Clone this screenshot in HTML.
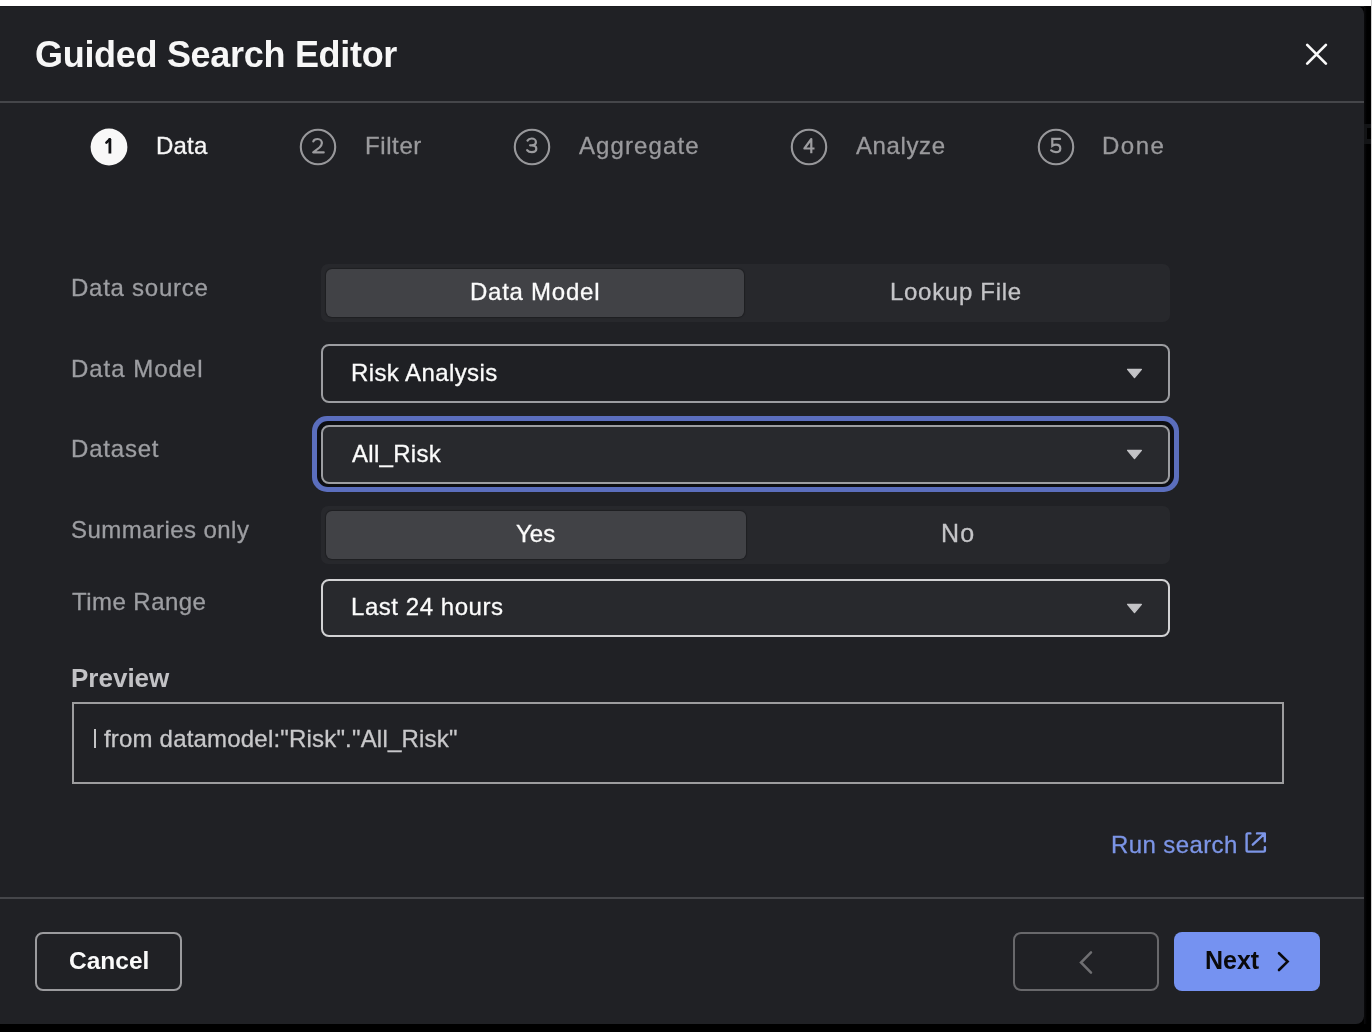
<!DOCTYPE html>
<html><head><meta charset="utf-8">
<style>
html,body{margin:0;padding:0;}
body{width:1372px;height:1032px;position:relative;overflow:hidden;background:#000;font-family:"Liberation Sans",sans-serif;}
.a{position:absolute;}
.t{position:absolute;white-space:nowrap;line-height:normal;will-change:transform;-webkit-text-stroke:0.3px currentColor;}
#topstrip{left:0;top:0;width:1372px;height:6px;background:#fff;}
#rline{left:1371px;top:0;width:1px;height:1032px;background:#cfcfcf;}
#dlg{left:-8px;top:6px;width:1372px;height:1018px;background:#202125;border-radius:8px;}
.div{height:2px;background:#45464a;left:0;width:1364px;}
.circ{width:33px;height:33px;border-radius:50%;border:2px solid #9d9d9f;}
.circ.on{background:#f8f8f8;border-color:#f8f8f8;}
.num{font-size:20.5px;color:#a3a3a5;}
.step{font-size:24px;color:#9a9a9d;}
.lbl{font-size:24px;color:#9d9ea2;}
.seg{background:#27282c;border-radius:7px;}
.segon{background:#414246;border-radius:6px;box-shadow:0 0 1px 1px rgba(0,0,0,0.25);}
.sel{box-sizing:border-box;border:2px solid #9c9da1;border-radius:8px;background:#1f2024;}
.val{font-size:24px;color:#fbfbfb;}
.tri{width:0;height:0;border-left:8px solid transparent;border-right:8px solid transparent;border-top:10px solid #c8c8ca;}
</style></head>
<body>
<div id="topstrip" class="a"></div>
<div id="dlg" class="a"></div>
<div class="a" style="left:0;top:6px;width:1364px;height:1px;background:#1b1c1f"></div>
<div id="rline" class="a"></div>
<div class="a" style="left:1364px;top:6px;width:3px;height:1018px;background:linear-gradient(to right,#0b0b0d,#000)"></div>
<div class="a" style="left:1364px;top:124px;width:7px;height:20px;background:#131416"></div>
<div class="a" style="left:1367px;top:128px;width:4px;height:11px;background:#000"></div>

<!-- header -->
<div class="t" style="left:35px;top:34px;font-size:36px;font-weight:bold;-webkit-text-stroke:0;color:#f7f7f7;letter-spacing:-0.3px;">Guided Search Editor</div>
<svg class="a" style="left:1302px;top:40px" width="29" height="29" viewBox="0 0 29 29"><path d="M5.2 4.9 L23.9 23.6 M23.9 4.9 L5.2 23.6" stroke="#fafafa" stroke-width="2.7" stroke-linecap="round"/></svg>
<div class="a div" style="top:101px"></div>

<!-- steps -->
<svg class="a" style="left:88.5px;top:126.5px" width="40" height="40" viewBox="0 0 40 40"><circle cx="20" cy="20" r="18.4" fill="#f8f8f8"/><g transform="translate(7.5,5.5)"><path d="M9.9,10.1 L13.2,7" fill="none" stroke="#111215" stroke-width="2.6" stroke-linecap="round"/><path d="M13.4,6.4 V21" fill="none" stroke="#111215" stroke-width="2.8"/><circle cx="13.2" cy="6.9" r="1.35" fill="#111215"/></g></svg>
<div class="t step" style="left:156px;top:132px;color:#f7f7f7;letter-spacing:0.2px">Data</div>

<svg class="a" style="left:298px;top:126.5px" width="40" height="40" viewBox="0 0 40 40"><circle cx="20" cy="20" r="17.2" fill="none" stroke="#98989b" stroke-width="2.1"/><g transform="translate(7,5.5)"><path d="M8.3,9 C8.8,7.2 10.8,6.5 12.7,6.5 C15.2,6.5 16.9,8.3 16.9,10.6 C16.9,12.3 16,13.5 14.5,15 L8.2,19.9 H18.7" fill="none" stroke="#9c9c9f" stroke-width="2.2" stroke-linecap="round" stroke-linejoin="round"/></g></svg>
<div class="t step" style="left:365px;top:132px;letter-spacing:0.6px">Filter</div>

<svg class="a" style="left:512.3px;top:126.5px" width="40" height="40" viewBox="0 0 40 40"><circle cx="20" cy="20" r="17.2" fill="none" stroke="#98989b" stroke-width="2.1"/><g transform="translate(7.3,5)"><path d="M8.2,8.6 C9,7.2 10.7,6.5 12.4,6.5 C14.8,6.5 16.6,8 16.6,10 C16.6,12 14.9,13.3 12.3,13.3 H10.8 M12.3,13.3 C15.1,13.3 17,14.7 17,16.8 C17,18.8 15.1,20.1 12.5,20.1 C10.5,20.1 8.8,19.3 7.9,18.2" fill="none" stroke="#9c9c9f" stroke-width="2.2" stroke-linecap="round" stroke-linejoin="round"/></g></svg>
<div class="t step" style="left:579px;top:132px;letter-spacing:1.1px">Aggregate</div>

<svg class="a" style="left:788.5px;top:126.5px" width="40" height="40" viewBox="0 0 40 40"><circle cx="20" cy="20" r="17.2" fill="none" stroke="#98989b" stroke-width="2.1"/><g transform="translate(6.5,5.5)"><path d="M15.8,20.7 V6.5 L8.9,16 H19" fill="none" stroke="#9c9c9f" stroke-width="2.2" stroke-linecap="butt" stroke-linejoin="round"/></g></svg>
<div class="t step" style="left:856px;top:132px;letter-spacing:0.6px">Analyze</div>

<svg class="a" style="left:1035.5px;top:126.5px" width="40" height="40" viewBox="0 0 40 40"><circle cx="20" cy="20" r="17.2" fill="none" stroke="#98989b" stroke-width="2.1"/><g transform="translate(6.5,4.9)"><path d="M17.6,7 H9.8 V13.9 C10.9,13.1 12.2,12.8 13.5,12.8 C16,12.8 17.8,14.3 17.8,16.5 C17.8,18.7 16,20.2 13.4,20.2 C11.3,20.2 9.6,19.5 8.6,18.4" fill="none" stroke="#9c9c9f" stroke-width="2.2" stroke-linecap="round" stroke-linejoin="miter"/></g></svg>
<div class="t step" style="left:1102px;top:132px;letter-spacing:1.5px">Done</div>

<!-- form labels -->
<div class="t lbl" style="left:71px;top:274px;letter-spacing:0.75px">Data source</div>
<div class="t lbl" style="left:71px;top:354.5px;letter-spacing:0.97px">Data Model</div>
<div class="t lbl" style="left:71px;top:435px;letter-spacing:0.8px">Dataset</div>
<div class="t lbl" style="left:71px;top:516px;letter-spacing:0.45px">Summaries only</div>
<div class="t lbl" style="left:72px;top:588px;letter-spacing:0.45px">Time Range</div>

<!-- segmented 1 -->
<div class="a seg" style="left:321px;top:264px;width:849px;height:58px"></div>
<div class="a segon" style="left:326px;top:269px;width:418px;height:48px"></div>
<div class="t val" style="left:470px;top:278px;letter-spacing:0.75px">Data Model</div>
<div class="t val" style="left:890px;top:278px;letter-spacing:0.7px;color:#c4c4c7">Lookup File</div>

<!-- select 1 -->
<div class="a sel" style="left:321px;top:344px;width:849px;height:58.5px"></div>
<div class="t val" style="left:351px;top:359px;letter-spacing:0.4px">Risk Analysis</div>
<svg class="a" style="left:1125.9px;top:367.9px" width="17" height="11" viewBox="0 0 17 11"><path d="M1.6,1.3 H15.4 L8.5,9.6 Z" fill="#c3c3c6" stroke="#c3c3c6" stroke-width="1.3" stroke-linejoin="round"/></svg>

<!-- select 2 focused -->
<div class="a" style="left:312px;top:416px;width:867px;height:76px;border-radius:15px;background:#5b6ebd"></div>
<div class="a" style="left:317px;top:421px;width:857px;height:66px;border-radius:11px;background:#0d0e12"></div>
<div class="a sel" style="left:321px;top:425px;width:849px;height:59px;background:#28292d"></div>
<div class="t val" style="left:352px;top:440px;letter-spacing:0.3px">All_Risk</div>
<svg class="a" style="left:1125.9px;top:448.9px" width="17" height="11" viewBox="0 0 17 11"><path d="M1.6,1.3 H15.4 L8.5,9.6 Z" fill="#c3c3c6" stroke="#c3c3c6" stroke-width="1.3" stroke-linejoin="round"/></svg>

<!-- segmented 2 -->
<div class="a seg" style="left:321px;top:505.5px;width:849px;height:58.5px"></div>
<div class="a segon" style="left:326px;top:511px;width:420px;height:48px"></div>
<div class="t val" style="left:516px;top:520px;">Yes</div>
<div class="t val" style="left:940.5px;top:519px;color:#c4c4c7;font-size:25px;letter-spacing:1.2px">No</div>

<!-- select 3 -->
<div class="a sel" style="left:321px;top:579px;width:849px;height:58px;background:#28292d;border-color:#d2d2d4"></div>
<div class="t val" style="left:351px;top:593px;letter-spacing:0.55px">Last 24 hours</div>
<svg class="a" style="left:1125.9px;top:602.5px" width="17" height="11" viewBox="0 0 17 11"><path d="M1.6,1.3 H15.4 L8.5,9.6 Z" fill="#c3c3c6" stroke="#c3c3c6" stroke-width="1.3" stroke-linejoin="round"/></svg>

<!-- preview -->
<div class="t" style="left:71px;top:663px;font-size:26px;font-weight:bold;-webkit-text-stroke:0;color:#c2c2c5">Preview</div>
<div class="a" style="left:72px;top:701.5px;width:1208px;height:78px;border:2px solid #9d9d9f"></div>
<div class="a" style="left:93.7px;top:729px;width:2.1px;height:19px;background:#c4c4c6"></div>
<div class="t" style="left:104px;top:724.6px;font-size:24px;color:#c8c8ca;letter-spacing:0.19px">from datamodel:"Risk"."All_Risk"</div>

<!-- run search -->
<div class="t" style="left:1111px;top:831px;font-size:24px;color:#7c95e6;letter-spacing:0.4px">Run search</div>
<svg class="a" style="left:1240px;top:826px" width="32" height="32" viewBox="0 0 32 32"><path d="M10.4,7.4 H7.9 Q6.6,7.4 6.6,8.7 V24.3 Q6.6,25.6 7.9,25.6 H23.6 Q24.9,25.6 24.9,24.3 V21.1 M17,7.4 H24.8 V15.3 M12.8,18.7 L24.1,8.1" fill="none" stroke="#7c95e6" stroke-width="2.4" stroke-linecap="round" stroke-linejoin="round"/></svg>

<!-- footer -->
<div class="a div" style="top:897px"></div>
<div class="a" style="left:35px;top:932px;width:143px;height:55px;border:2px solid #9b9b9e;border-radius:8px"></div>
<div class="t" style="left:69px;top:947px;font-size:24.5px;font-weight:bold;-webkit-text-stroke:0;color:#fafafa">Cancel</div>

<div class="a" style="left:1012.5px;top:932px;width:142.5px;height:55px;border:2px solid #68686b;border-radius:8px"></div>
<svg class="a" style="left:1075.8px;top:948.5px" width="20" height="27" viewBox="0 0 20 27"><path d="M15 3.4 L5 13.5 L15 23.6" fill="none" stroke="#6f6f72" stroke-width="2.5" stroke-linecap="round"/></svg>

<div class="a" style="left:1173.5px;top:932px;width:146.5px;height:59px;background:#7592f1;border-radius:8px"></div>
<div class="t" style="left:1205px;top:946px;font-size:25px;font-weight:bold;-webkit-text-stroke:0;color:#0a0a0c">Next</div>
<svg class="a" style="left:1274px;top:949.5px" width="18" height="23" viewBox="0 0 18 23"><path d="M5 3.2 L13.6 11.6 L5 20" fill="none" stroke="#0a0a0c" stroke-width="2.6" stroke-linecap="round" stroke-linejoin="miter"/></svg>

</body></html>
